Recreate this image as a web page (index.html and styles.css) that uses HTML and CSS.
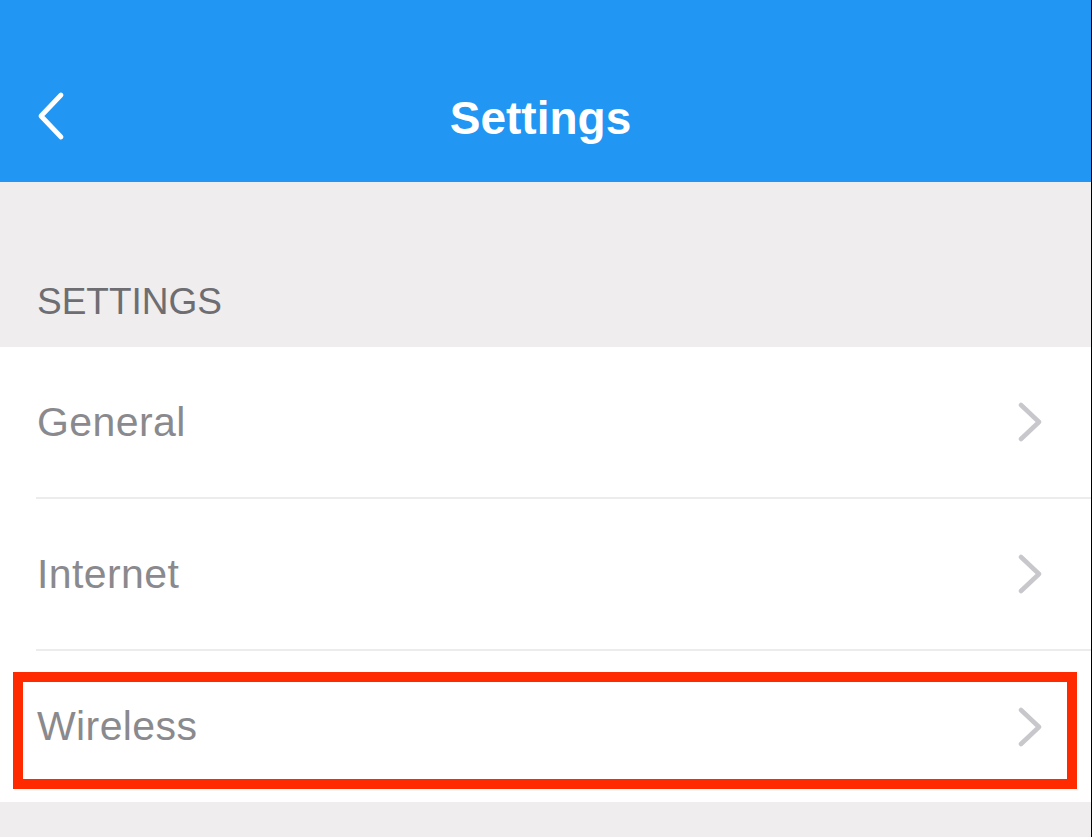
FILE: index.html
```html
<!DOCTYPE html>
<html>
<head>
<meta charset="utf-8">
<link rel="stylesheet" href="styles.css">
</head>
<body>
<div class="screen">
  <header class="header">
    <div class="nav">
      <div class="nav-left">
        <svg class="back" width="32" height="52" viewBox="0 0 32 52">
          <polyline points="25,5 5,26 25,47" fill="none" stroke="#ffffff" stroke-width="4.8" stroke-linecap="round" stroke-linejoin="round"/>
        </svg>
      </div>
      <div class="nav-title">Settings</div>
      <div class="nav-right"></div>
    </div>
  </header>
  <div class="section-head">SETTINGS</div>
  <div class="list">
    <div class="row">
      <div class="row-body">
        <span class="row-label">General</span>
        <svg class="chev" width="28" height="40" viewBox="0 0 28 40"><polyline points="4,3 22,20 4,37" fill="none" stroke="#c7c7cc" stroke-width="4.5" stroke-linecap="round" stroke-linejoin="round"/></svg>
      </div>
    </div>
    <div class="row">
      <div class="row-body">
        <span class="row-label">Internet</span>
        <svg class="chev" width="28" height="40" viewBox="0 0 28 40"><polyline points="4,3 22,20 4,37" fill="none" stroke="#c7c7cc" stroke-width="4.5" stroke-linecap="round" stroke-linejoin="round"/></svg>
      </div>
    </div>
    <div class="row row-last">
      <div class="row-body">
        <span class="row-label">Wireless</span>
        <svg class="chev" width="28" height="40" viewBox="0 0 28 40"><polyline points="4,3 22,20 4,37" fill="none" stroke="#c7c7cc" stroke-width="4.5" stroke-linecap="round" stroke-linejoin="round"/></svg>
      </div>
      <div class="highlight"></div>
    </div>
  </div>
  <div class="footer-gap"></div>
</div>
</body>
</html>
```

FILE: styles.css
```css
html, body {
  margin: 0;
  padding: 0;
}
body {
  width: 1092px;
  height: 837px;
  overflow: hidden;
  background: #efedee;
  font-family: "Liberation Sans", Arial, sans-serif;
}
.screen {
  width: 1091px;
  height: 837px;
  border-right: 1px solid #000;
  display: flex;
  flex-direction: column;
  background: #efedee;
  overflow: hidden;
}
.header {
  background: #2196f3;
  height: 182px;
  padding-top: 50px;
  box-sizing: border-box;
  flex-shrink: 0;
}
.nav {
  height: 132px;
  display: grid;
  grid-template-columns: 200px 1fr 200px;
  align-items: center;
  padding-right: 10px;
}
.nav-left {
  display: flex;
  align-items: center;
  padding-left: 36px;
}
.back {
  display: block;
}
.nav-title {
  text-align: center;
  color: #ffffff;
  font-size: 46px;
  font-weight: bold;
  line-height: 1;
  margin-top: 4px;
}
.section-head {
  height: 165px;
  box-sizing: border-box;
  display: flex;
  align-items: flex-end;
  padding-left: 37px;
  padding-bottom: 27px;
  color: #6d6d72;
  font-size: 37px;
  line-height: 1;
  flex-shrink: 0;
}
.list {
  background: #ffffff;
  flex-shrink: 0;
}
.row {
  position: relative;
  padding-left: 36px;
  display: flex;
}
.row-body {
  flex: 1;
  height: 150px;
  display: flex;
  align-items: center;
  justify-content: space-between;
  padding-right: 46px;
  border-bottom: 2px solid #ececec;
}
.row-last .row-body {
  border-bottom: none;
  height: 151px;
}
.row-label {
  color: #8a8a8e;
  font-size: 41px;
  letter-spacing: 0.4px;
  line-height: 1;
  padding-left: 1px;
}
.chev {
  display: block;
}
.highlight {
  position: absolute;
  left: 13px;
  top: 21px;
  right: 14px;
  bottom: 13px;
  border: 10px solid #ff2a00;
  pointer-events: none;
}
.footer-gap {
  flex: 1;
  background: #efedee;
}
```
